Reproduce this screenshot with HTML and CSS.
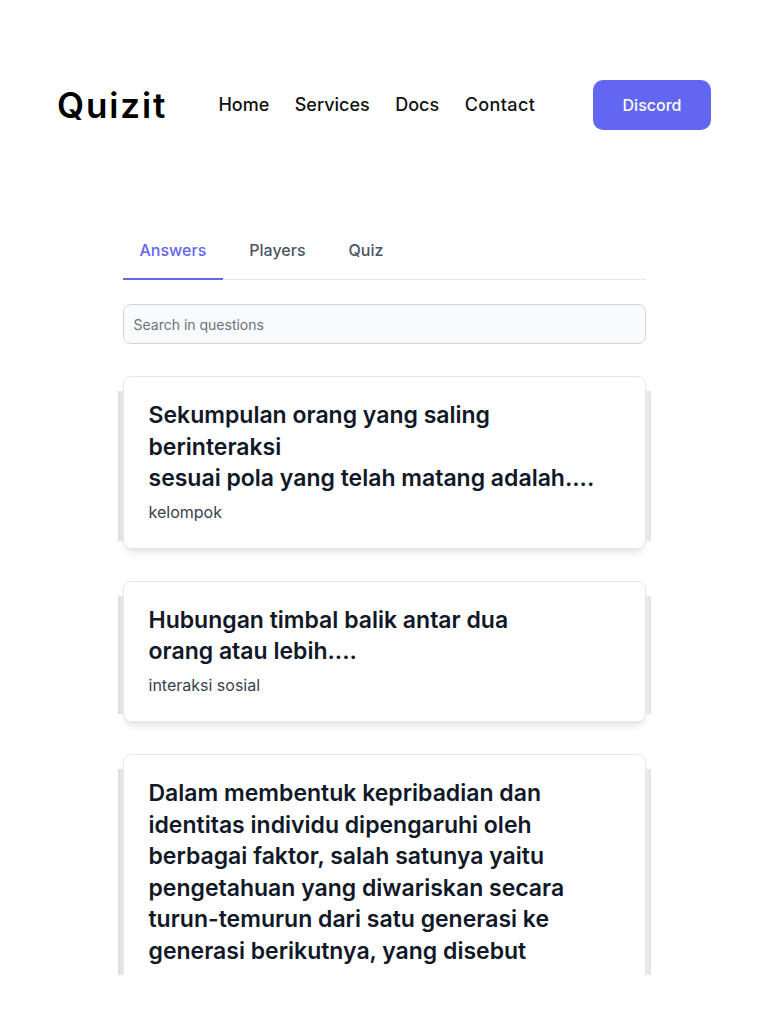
FILE: index.html
```html
<!DOCTYPE html>
<html lang="id">
<head>
<meta charset="utf-8">
<title>Quizit</title>
<link rel="stylesheet" href="styles.css">
</head>
<body>
<div class="page">
  <header class="header">
    <div class="logo">Quizit</div>
    <nav class="nav">
      <a href="#">Home</a>
      <a href="#">Services</a>
      <a href="#">Docs</a>
      <a href="#">Contact</a>
    </nav>
    <a class="discord" href="#">Discord</a>
  </header>

  <main class="main">
    <div class="tabs">
      <div class="tab active">Answers</div>
      <div class="tab">Players</div>
      <div class="tab">Quiz</div>
    </div>
    <input class="search" type="text" placeholder="Search in questions">

    <div class="cards">
      <div class="card">
        <h2 class="question">Sekumpulan orang yang saling berinteraksi<br>sesuai pola yang telah matang adalah....</h2>
        <p class="answer">kelompok</p>
      </div>
      <div class="card">
        <h2 class="question">Hubungan timbal balik antar dua<br>orang atau lebih....</h2>
        <p class="answer">interaksi sosial</p>
      </div>
      <div class="card">
        <h2 class="question">Dalam membentuk kepribadian dan identitas individu dipengaruhi oleh berbagai faktor, salah satunya yaitu pengetahuan yang diwariskan secara turun-temurun dari satu generasi ke generasi berikutnya, yang disebut<br>....</h2>
        <p class="answer">tradisi</p>
      </div>
    </div>
  </main>
</div>
</body>
</html>
```

FILE: styles.css
```css
* { box-sizing: border-box; }

html {
  background: #ffffff;
}

html, body {
  margin: 0;
  padding: 0;
}

body {
  font-family: "Inter", "Liberation Sans", sans-serif;
  color: #111827;
}

.page {
  height: 975px;
  overflow: hidden;
}

.header {
  display: flex;
  align-items: center;
  padding: 79px 57px 0 57px;
  height: 130px;
}

.logo {
  font-size: 35px;
  font-weight: 600;
  color: #000;
  letter-spacing: 1.9px;
  line-height: 50px;
}

.nav {
  display: flex;
  gap: 25.5px;
  margin-left: 51px;
}

.nav a {
  font-size: 18px;
  font-weight: 500;
  color: #111;
  text-decoration: none;
}

.nav a:last-child {
  letter-spacing: 0.4px;
}

.discord {
  margin-left: auto;
  width: 118px;
  height: 50px;
  margin-top: 1px;
  border-radius: 10px;
  background: #6366f1;
  color: #fff;
  font-size: 16px;
  font-weight: 500;
  text-decoration: none;
  display: flex;
  align-items: center;
  justify-content: center;
}

.main {
  width: 523px;
  margin: 108px auto 0;
}

.tabs {
  display: flex;
  gap: 9px;
  border-bottom: 1px solid #e5e7eb;
}

.tab {
  padding: 0 17px 16px;
  font-size: 16px;
  line-height: 24px;
  font-weight: 500;
  color: #4b5563;
  border-bottom: 2px solid transparent;
  margin-bottom: -1px;
}

.tab.active {
  color: #6366f1;
  border-bottom-color: #6366f1;
}

.search {
  display: block;
  width: 100%;
  height: 40px;
  margin-top: 24px;
  padding: 0 10px;
  border: 1px solid #d1d5db;
  border-radius: 8px;
  background: #f9fafb;
  font-family: inherit;
  font-size: 14px;
  color: #111827;
}

.search::placeholder {
  color: #6b7280;
}

.cards {
  display: flex;
  flex-direction: column;
  gap: 32px;
  margin-top: 32px;
}

.card {
  position: relative;
  background: #fff;
  border: 1px solid #e5e7eb;
  border-radius: 8px;
  padding: 23px 25px 24px;
  box-shadow: 0 8px 10px -4px rgba(0,0,0,0.09), 0 3px 5px -2px rgba(0,0,0,0.05);
}

.card::before {
  content: "";
  position: absolute;
  left: -6px;
  right: -6px;
  top: 14px;
  bottom: 7px;
  background: linear-gradient(90deg, #dcdcdc 0, #f0f0f0 6px, #f4f4f4 calc(100% - 6px), #e2e2e2 100%);
  z-index: -1;
}

.question {
  margin: 0;
  font-size: 23px;
  line-height: 31.6px;
  font-weight: 600;
  color: #111827;
}

.answer {
  margin: 5px 0 0;
  font-size: 16px;
  line-height: 24px;
  color: #374151;
}
```
